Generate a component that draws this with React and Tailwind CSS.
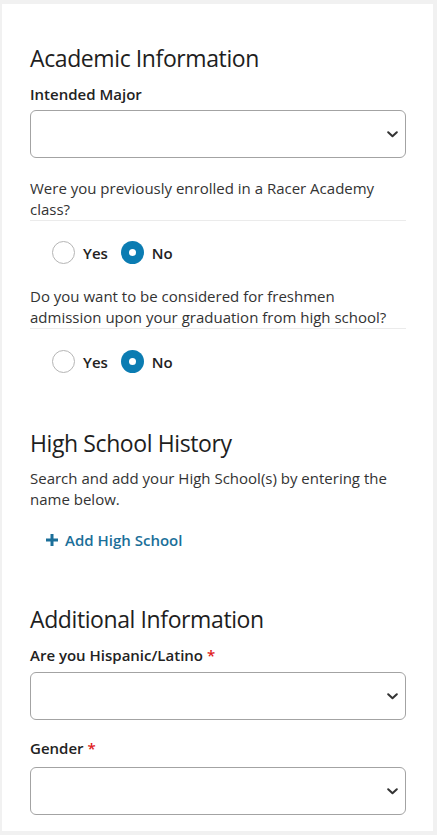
import React from "react";

const font = { fontFamily: '"Open Sans", "Noto Sans", Arial, sans-serif' };

function Chevron() {
  return (
    <svg width="11" height="7" viewBox="0 0 11 7" className="mr-[7px]">
      <polyline points="1.2,1.2 5.5,5.3 9.8,1.2" fill="none" stroke="#333" strokeWidth="2" strokeLinecap="round" strokeLinejoin="round" />
    </svg>
  );
}

function Select({ className = "" }) {
  return (
    <div className={"h-[48px] w-full rounded-[6px] border border-[#a3a3a3] bg-white flex items-center justify-end " + className}>
      <Chevron />
    </div>
  );
}

function Radio({ checked, label }) {
  return (
    <div className="flex items-center gap-[8px]">
      {checked ? (
        <div className="w-[23px] h-[23px] rounded-full bg-[#0b7cb2] flex items-center justify-center">
          <div className="w-[7px] h-[7px] rounded-full bg-white" />
        </div>
      ) : (
        <div className="w-[23px] h-[23px] rounded-full border border-[#b5b5b5] bg-white" />
      )}
      <span className="text-[15px] leading-[22px] font-semibold text-[#222]">{label}</span>
    </div>
  );
}

function RadioRow({ className = "" }) {
  return (
    <div className={"flex items-center gap-[13px] pl-[22px] " + className}>
      <Radio label="Yes" />
      <Radio checked label="No" />
    </div>
  );
}

const headingCls = "text-[23px] leading-[29px] font-normal tracking-[-0.4px] text-[#1e1e1e]";

export default function App() {
  return (
    <div className="min-h-[835px] bg-[#f1f1f1] pt-[4px] pl-[2px]" style={font}>
      <div className="w-[431px] bg-white pt-[40px] pl-[28px] pr-[27px] pb-[16px] flex flex-col">
        <h2 className={headingCls}>Academic Information</h2>
        <div className="mt-[10px] text-[15px] leading-[22px] font-semibold text-[#222]">Intended Major</div>
        <Select className="mt-[5px]" />
        <div className="mt-[20px] text-[15px] leading-[21px] text-[#333] border-b border-[#ebebeb]">
          Were you previously enrolled in a Racer Academy class?
        </div>
        <RadioRow className="mt-[20px]" />
        <div className="mt-[22px] text-[15px] leading-[21px] text-[#333] border-b border-[#ebebeb]">
          Do you want to be considered for freshmen admission upon your graduation from high school?
        </div>
        <RadioRow className="mt-[21px]" />

        <h2 className={"mt-[56px] " + headingCls}>High School History</h2>
        <div className="mt-[10px] text-[15px] leading-[21px] text-[#333]">
          Search and add your High School(s) by entering the name below.
        </div>
        <div className="mt-[19px] pl-[16px] flex items-center gap-[7px] text-[15px] leading-[22px] font-semibold text-[#1b6f99]">
          <svg width="12" height="12" viewBox="0 0 12 12">
            <rect x="4.5" y="0" width="3" height="12" fill="#1b6f99" />
            <rect x="0" y="4.5" width="12" height="3" fill="#1b6f99" />
          </svg>
          <span>Add High School</span>
        </div>

        <h2 className={"mt-[54px] " + headingCls}>Additional Information</h2>
        <div className="mt-[10px] text-[15px] leading-[22px] font-semibold text-[#222]">
          Are you Hispanic/Latino <span className="text-[#e02020]">*</span>
        </div>
        <Select className="mt-[6px]" />
        <div className="mt-[17px] text-[15px] leading-[22px] font-semibold text-[#222]">
          Gender <span className="text-[#e02020]">*</span>
        </div>
        <Select className="mt-[8px]" />
      </div>
    </div>
  );
}
